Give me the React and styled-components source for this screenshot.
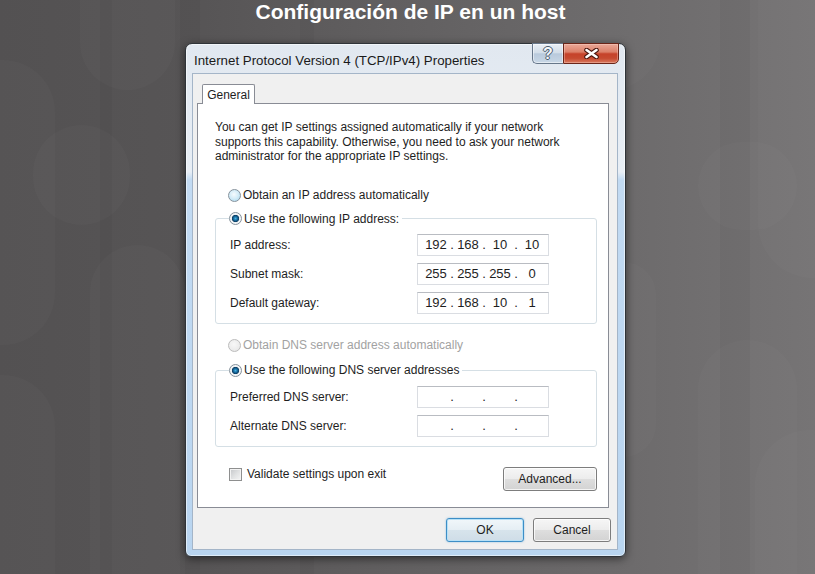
import React from "react";
import styled, { createGlobalStyle } from "styled-components";

const GlobalStyle = createGlobalStyle`
  html, body { margin: 0; padding: 0; }
  body { background: #5e5c5d; font-family: "Liberation Sans", Arial, sans-serif; }
`;

const Page = styled.div`
  position: relative;
  isolation: isolate;
  width: 815px;
  height: 574px;
  overflow: hidden;
  background: linear-gradient(90deg, #535152 0%, #575556 25%, #646263 55%, #767475 100%);
  display: flex;
  flex-direction: column;
  font-family: "Liberation Sans", Arial, sans-serif;
`;

const Backdrop = styled.svg`
  position: absolute;
  left: 0;
  top: 0;
  width: 815px;
  height: 574px;
  z-index: -1;
`;

const Heading = styled.h1`
  margin: 0;
  padding: 1px 0 0 6px;
  font: bold 21px/21px "Liberation Sans", Arial, sans-serif;
  color: #ffffff;
  text-align: center;
`;

const Dialog = styled.div`
  margin: 21px 0 0 185px;
  width: 441px;
  height: 514px;
  box-sizing: border-box;
  border: 1px solid #2f3439;
  border-radius: 7px 7px 6px 6px;
  background: linear-gradient(180deg, #e1e8f0 0%, #e8eef5 25%, #c2daf2 26.5%, #b9d5f0 100%);
  box-shadow: inset 0 0 0 1px rgba(255, 255, 255, 0.55), 0 2px 9px rgba(0, 0, 0, 0.5);
  display: flex;
  flex-direction: column;
`;

const TitleBar = styled.div`
  height: 29px;
  flex: none;
  display: flex;
  padding: 0 6px 0 8px;
`;

const TitleText = styled.div`
  flex: 1;
  padding-top: 8px;
  font-size: 13.3px;
  line-height: 17px;
  color: #1a1a1a;
  white-space: nowrap;
`;

const CaptionGroup = styled.div`
  display: flex;
  align-self: flex-start;
  margin-top: -1px;
  height: 21px;
`;

const HelpButton = styled.div`
  width: 31px;
  box-sizing: border-box;
  border: 1px solid #67778a;
  border-right: none;
  border-radius: 0 0 0 5px;
  background: linear-gradient(180deg, #e8eef5 0%, #d3dee9 45%, #b9cadc 52%, #c8d7e6 100%);
  box-shadow: inset 0 0 0 1px rgba(255, 255, 255, 0.5);
  display: flex;
  align-items: center;
  justify-content: center;
  font: bold 16px/1 "Liberation Sans", Arial, sans-serif;
  color: #f4f7fa;
  text-shadow: 1px 0 #4b5b6c, -1px 0 #4b5b6c, 0 1px #4b5b6c, 0 -1px #4b5b6c;
`;

const CloseButton = styled.div`
  width: 56px;
  box-sizing: border-box;
  border: 1px solid #6a2519;
  border-radius: 0 0 5px 0;
  background: linear-gradient(180deg, #eaa898 0%, #dc8069 42%, #c6422a 52%, #c64a30 75%, #d9795f 100%);
  box-shadow: inset 0 0 0 1px rgba(255, 220, 210, 0.35);
  display: flex;
  align-items: center;
  justify-content: center;
`;

const Client = styled.div`
  flex: 1;
  margin: 0 7px 6px 6px;
  background: #f0f0f0;
  border: 1px solid #a4b5c8;
  display: flex;
  flex-direction: column;
`;

const TabStrip = styled.div`
  display: flex;
  margin: 10px 0 0 9px;
`;

const Tab = styled.div`
  position: relative;
  z-index: 1;
  width: 53px;
  height: 20px;
  box-sizing: border-box;
  margin-bottom: -1px;
  border: 1px solid #898c95;
  border-bottom: none;
  border-radius: 2px 2px 0 0;
  background: #ffffff;
  font-size: 12px;
  line-height: 20px;
  text-align: center;
  color: #1e1e1e;
`;

const Panel = styled.div`
  margin: 0 8px 0 4px;
  height: 405px;
  box-sizing: border-box;
  border: 1px solid #898c95;
  background: #ffffff;
  padding: 16px 11px 0 17px;
  display: flex;
  flex-direction: column;
  font-size: 12px;
  color: #1e1e1e;
`;

const Intro = styled.p`
  margin: 0;
  line-height: 14.5px;
`;

const OptionRow = styled.label`
  display: flex;
  align-items: center;
  gap: 2px;
  height: 14px;
  line-height: 14px;
  margin: ${(p) => p.$mt || 0}px 0 0 13px;
  color: ${(p) => (p.$disabled ? "#a2a2a2" : "#1e1e1e")};
`;

const radioBg = {
  idle: "radial-gradient(circle at 45% 40%, #f6fbfe 0%, #d2ebf7 50%, #a3d3ec 100%)",
  checked:
    "radial-gradient(circle at 50% 50%, #46b4e4 0px, #1a6fa3 1.8px, #0c3b60 3.4px, #e9edf0 3.9px, #f7f8f9 60%, #d6dce1 100%)",
  disabled: "radial-gradient(circle at 45% 40%, #f8f8f8 0%, #ececec 60%, #dedede 100%)",
};

const Radio = styled.span`
  flex: none;
  width: 13px;
  height: 13px;
  box-sizing: border-box;
  border-radius: 50%;
  border: 1px solid ${(p) => (p.$variant === "disabled" ? "#bcbcbc" : "#86929c")};
  background: ${(p) => radioBg[p.$variant]};
`;

const Group = styled.fieldset`
  margin: ${(p) => p.$mt}px 0 0 0;
  padding: 8.5px 0 ${(p) => p.$pb}px 14px;
  border: 1px solid #d5dfe5;
  border-radius: 3px;
  min-width: 0;
`;

const GroupLegend = styled.legend`
  padding: 0 3px 0 0;
  margin-left: -1px;
  display: flex;
  align-items: center;
  gap: 2px;
  height: 14px;
  line-height: 14px;
`;

const FieldGrid = styled.div`
  display: grid;
  grid-template-columns: 187px 132px;
  grid-auto-rows: 22px;
  row-gap: 7px;
  align-items: center;
`;

const FieldLabel = styled.span`
  line-height: 14px;
`;

const IpBox = styled.div`
  height: 22px;
  box-sizing: border-box;
  border: 1px solid #dadde2;
  border-top-color: #b9bcc2;
  background: #ffffff;
  display: flex;
  padding-left: 6px;
  font-size: 13px;
  line-height: 20px;
  color: #1e1e1e;
`;

const IpSegment = styled.span`
  width: 24px;
  text-align: center;
`;

const IpDot = styled.span`
  width: 8px;
  text-align: center;
`;

const BottomRow = styled.div`
  display: flex;
  justify-content: space-between;
  align-items: flex-start;
  margin-top: 20px;
  padding-left: 14px;
`;

const CheckRow = styled.label`
  display: flex;
  align-items: center;
  gap: 5px;
  height: 14px;
  line-height: 14px;
`;

const Checkbox = styled.span`
  width: 13px;
  height: 13px;
  box-sizing: border-box;
  border: 1px solid #8e8f8f;
  background: linear-gradient(135deg, #c4c6c9 0%, #e2e3e4 55%, #f5f5f5 100%);
  box-shadow: inset 0 0 0 1px #f3f3f3;
`;

const Button = styled.button`
  width: ${(p) => p.$w}px;
  height: 24px;
  padding: 0;
  box-sizing: border-box;
  border: 1px solid ${(p) => (p.$primary ? "#3d8ec6" : "#7d7d7d")};
  border-radius: 3px;
  background: ${(p) =>
    p.$primary
      ? "linear-gradient(180deg, #f1f7fa 0%, #e5eef4 50%, #d7e4ec 51%, #cfdde7 100%)"
      : "linear-gradient(180deg, #f6f6f6 0%, #ececec 50%, #dedede 51%, #d3d3d3 100%)"};
  box-shadow: ${(p) =>
    p.$primary
      ? "inset 0 0 0 1px #b7e1f7, 0 0 2px rgba(60, 150, 210, 0.55)"
      : "inset 0 0 0 1px rgba(255, 255, 255, 0.75)"};
  font: 12px/22px "Liberation Sans", Arial, sans-serif;
  color: #1e1e1e;
`;

const FooterRow = styled.div`
  display: flex;
  justify-content: flex-end;
  gap: 9px;
  margin-top: 10px;
  padding-right: 6px;
`;

function IpField({ parts }) {
  return (
    <IpBox>
      {parts.map((p, i) => (
        <React.Fragment key={i}>
          {i > 0 && <IpDot>.</IpDot>}
          <IpSegment>{p}</IpSegment>
        </React.Fragment>
      ))}
    </IpBox>
  );
}

function CloseGlyph() {
  return (
    <svg width="15" height="11" viewBox="0 0 15 11">
      <g strokeLinecap="round">
        <path d="M2.5 2 L12.5 9 M12.5 2 L2.5 9" stroke="#4a1710" strokeWidth="4.6" />
        <path d="M2.5 2 L12.5 9 M12.5 2 L2.5 9" stroke="#ffffff" strokeWidth="2.6" />
      </g>
    </svg>
  );
}

const ipRows = [
  { label: "IP address:", parts: ["192", "168", "10", "10"] },
  { label: "Subnet mask:", parts: ["255", "255", "255", "0"] },
  { label: "Default gateway:", parts: ["192", "168", "10", "1"] },
];

const dnsRows = [
  { label: "Preferred DNS server:", parts: ["", "", "", ""] },
  { label: "Alternate DNS server:", parts: ["", "", "", ""] },
];

function Background() {
  return (
    <Backdrop viewBox="0 0 815 574" aria-hidden="true">
      <g fill="#000000" fillOpacity="0.03">
        <rect x="100" y="0" width="12" height="574" />
        <rect x="180" y="0" width="20" height="574" />
        <rect x="300" y="0" width="14" height="574" />
        <rect x="720" y="0" width="30" height="574" />
      </g>
      <g fill="#ffffff" fillOpacity="0.02">
        <rect x="80" y="-110" width="95" height="200" rx="47.5" />
        <rect x="33" y="125" width="97" height="100" rx="48.5" />
        <rect x="-50" y="60" width="105" height="285" rx="52" />
        <rect x="90" y="245" width="95" height="400" rx="47.5" />
        <rect x="-50" y="375" width="105" height="300" rx="52" />
        <rect x="758" y="-110" width="110" height="388" rx="55" />
        <rect x="698" y="142" width="99" height="88" rx="44" />
        <rect x="590" y="262" width="66" height="195" rx="33" />
        <rect x="698" y="340" width="99" height="300" rx="49.5" />
        <rect x="755" y="430" width="110" height="250" rx="55" />
        <rect x="560" y="-60" width="100" height="150" rx="50" />
      </g>
    </Backdrop>
  );
}

export default function App() {
  return (
    <>
      <GlobalStyle />
      <Page>
        <Background />
        <Heading>Configuración de IP en un host</Heading>
        <Dialog>
          <TitleBar>
            <TitleText>Internet Protocol Version 4 (TCP/IPv4) Properties</TitleText>
            <CaptionGroup>
              <HelpButton>?</HelpButton>
              <CloseButton>
                <CloseGlyph />
              </CloseButton>
            </CaptionGroup>
          </TitleBar>
          <Client>
            <TabStrip>
              <Tab>General</Tab>
            </TabStrip>
            <Panel>
              <Intro>
                You can get IP settings assigned automatically if your network
                <br />
                supports this capability. Otherwise, you need to ask your network
                <br />
                administrator for the appropriate IP settings.
              </Intro>
              <OptionRow $mt={24.5}>
                <Radio $variant="idle" />
                Obtain an IP address automatically
              </OptionRow>
              <Group $mt={9.5} $pb={9}>
                <GroupLegend>
                  <Radio $variant="checked" />
                  Use the following IP address:
                </GroupLegend>
                <FieldGrid>
                  {ipRows.map((r) => (
                    <React.Fragment key={r.label}>
                      <FieldLabel>{r.label}</FieldLabel>
                      <IpField parts={r.parts} />
                    </React.Fragment>
                  ))}
                </FieldGrid>
              </Group>
              <OptionRow $mt={14} $disabled>
                <Radio $variant="disabled" />
                Obtain DNS server address automatically
              </OptionRow>
              <Group $mt={11} $pb={9.5}>
                <GroupLegend>
                  <Radio $variant="checked" />
                  Use the following DNS server addresses
                </GroupLegend>
                <FieldGrid>
                  {dnsRows.map((r) => (
                    <React.Fragment key={r.label}>
                      <FieldLabel>{r.label}</FieldLabel>
                      <IpField parts={r.parts} />
                    </React.Fragment>
                  ))}
                </FieldGrid>
              </Group>
              <BottomRow>
                <CheckRow>
                  <Checkbox />
                  Validate settings upon exit
                </CheckRow>
                <Button $w={94}>Advanced...</Button>
              </BottomRow>
            </Panel>
            <FooterRow>
              <Button $w={78} $primary>
                OK
              </Button>
              <Button $w={78}>Cancel</Button>
            </FooterRow>
          </Client>
        </Dialog>
      </Page>
    </>
  );
}
